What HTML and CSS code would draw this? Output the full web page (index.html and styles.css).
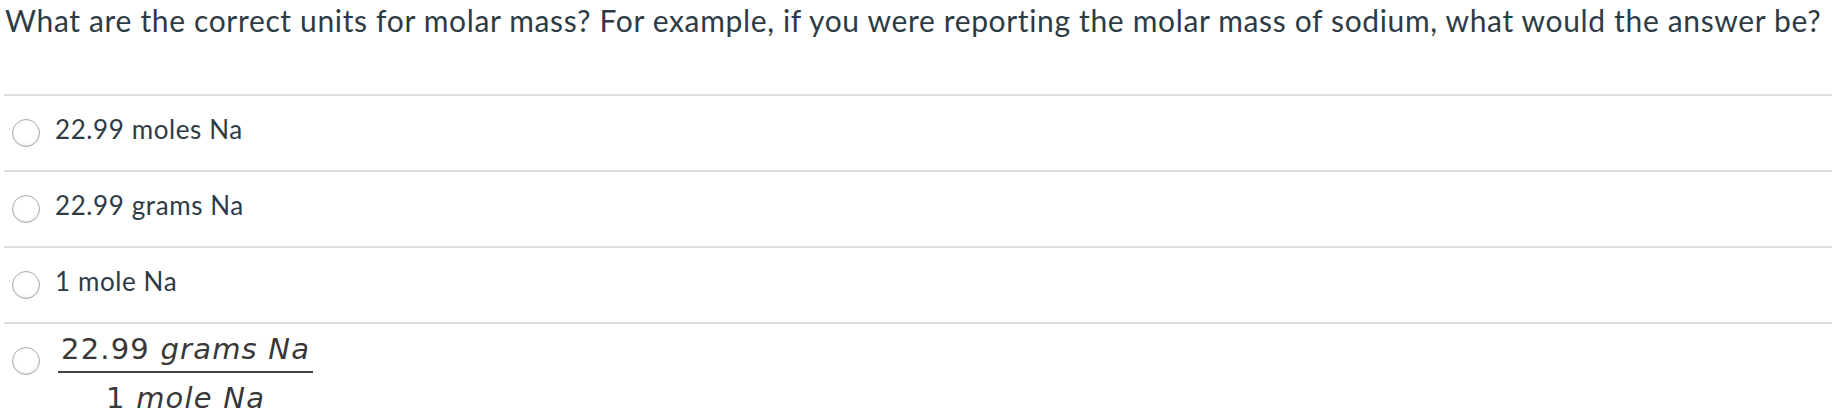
FILE: index.html
```html
<!DOCTYPE html>
<html>
<head>
<meta charset="utf-8">
<link rel="stylesheet" href="styles.css">
</head>
<body>
<div class="question">
  <p class="prompt">What are the correct units for molar mass? For example, if you were reporting the molar mass of sodium, what would the answer be?</p>
  <div class="answers">
    <label class="answer"><span class="radio"></span><span class="text">22.99 moles Na</span></label>
    <label class="answer"><span class="radio"></span><span class="text">22.99 grams Na</span></label>
    <label class="answer"><span class="radio"></span><span class="text">1 mole Na</span></label>
    <label class="answer frac-row"><span class="radio"></span>
      <span class="frac">
        <span class="num">22.99 <i>grams Na</i></span>
        <span class="den">1 <i>mole Na</i></span>
      </span>
    </label>
  </div>
</div>
</body>
</html>
```
FILE: styles.css
```css
html, body {
  margin: 0;
  padding: 0;
  background: #fff;
}
body {
  font-family: Lato, "Liberation Sans", sans-serif;
  color: #2d3b45;
  overflow: hidden;
}
.question {
  padding-left: 4px;
}
.prompt {
  margin: 0;
  padding: 0 0 0 1px;
  font-size: 30px;
  letter-spacing: 0.65px;
  line-height: 40px;
  height: 94px;
  white-space: nowrap;
}
.answers {
  display: flex;
  flex-direction: column;
}
.answer {
  display: flex;
  align-items: center;
  border-top: 2px solid #dcdcdc;
  height: 74px;
  padding-left: 8px;
}
.radio {
  width: 26px;
  height: 26px;
  border-radius: 50%;
  border: 1px solid #a9a9a9;
  background: radial-gradient(circle at 50% 40%, #ffffff 55%, #f0f0f0 100%);
  box-shadow: inset 0 -1px 1px rgba(0,0,0,0.08);
  flex: none;
}
.text {
  margin-left: 15px;
  font-size: 26px;
  letter-spacing: 0.6px;
  line-height: 30px;
  padding-bottom: 9px;
}
.frac-row {
  height: 94px;
  align-items: flex-start;
}
.frac-row .radio {
  margin-top: 23px;
}
.frac {
  margin-left: 18px;
  display: flex;
  flex-direction: column;
  align-items: center;
  font-family: "DejaVu Sans", sans-serif;
  font-size: 29px;
  color: #383838;
  margin-top: 8px;
}
.frac i {
  font-style: oblique;
}
.num {
  padding: 0 3px 5px;
  border-bottom: 2px solid #444;
  line-height: 34px;
  letter-spacing: 1.2px;
}
.den {
  line-height: 50px;
  letter-spacing: 1.2px;
}
```
